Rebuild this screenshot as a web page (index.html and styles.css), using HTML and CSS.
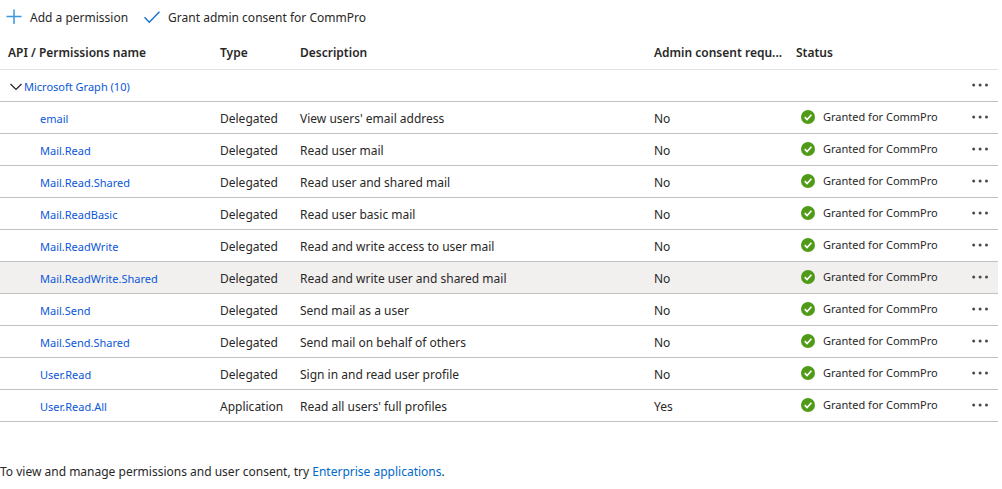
FILE: index.html
```
<!DOCTYPE html>
<html lang="en">
<head>
    <meta charset="UTF-8">
    <meta name="viewport" content="width=device-width, initial-scale=1.0">
    <title>API permissions</title>
    <link rel="stylesheet" href="styles.css">
</head>
<body>
    <!-- Shared icons -->
    <svg class="icon-defs" aria-hidden="true">
        <symbol id="granted" viewBox="0 0 14 14">
            <circle cx="7" cy="7" r="7" fill="#4f9a17"/>
            <path d="M3.7 7.2 L6.1 9.6 L10.4 4.7" fill="none" stroke="#fff" stroke-width="1.7"/>
        </symbol>
        <symbol id="more" viewBox="0 0 16 4">
            <circle cx="1.7" cy="2" r="1.5"/>
            <circle cx="8.1" cy="2" r="1.5"/>
            <circle cx="14.5" cy="2" r="1.5"/>
        </symbol>
    </svg>

    <div class="toolbar">
        <button class="command">
            <svg class="command-icon" viewBox="0 0 16 16"><path d="M8 0.5 V15 M0.5 7.5 H15.5" stroke="#3a96dd" stroke-width="1.5"/></svg>
            Add a permission
        </button>
        <button class="command">
            <svg class="command-icon" viewBox="0 0 16 16"><path d="M0.5 8.3 L5.3 13.2 L15.5 2.8" fill="none" stroke="#1a73d0" stroke-width="1.5"/></svg>
            Grant admin consent for CommPro
        </button>
    </div>

    <table class="permissions">
        <colgroup>
            <col class="col-name">
            <col class="col-type">
            <col class="col-description">
            <col class="col-consent">
            <col class="col-status">
            <col class="col-more">
        </colgroup>
        <thead>
            <tr>
                <th>API / Permissions name</th>
                <th>Type</th>
                <th>Description</th>
                <th>Admin consent requ...</th>
                <th>Status</th>
                <th></th>
            </tr>
        </thead>
        <tbody>
            <tr class="group">
                <td colspan="5">
                    <div class="group-name">
                        <button class="toggle" aria-label="Collapse Microsoft Graph"><svg viewBox="0 0 12 8"><path d="M0.5 1 L6 6.5 L11.5 1" fill="none" stroke="#222" stroke-width="1.2"/></svg></button>
                        <a href="#">Microsoft Graph (10)</a>
                    </div>
                </td>
                <td><button class="more" aria-label="More"><svg><use href="#more"/></svg></button></td>
            </tr>
            <tr>
                <td><a href="#">email</a></td>
                <td>Delegated</td>
                <td>View users' email address</td>
                <td>No</td>
                <td><div class="status"><svg><use href="#granted"/></svg>Granted for CommPro</div></td>
                <td><button class="more" aria-label="More"><svg><use href="#more"/></svg></button></td>
            </tr>
            <tr>
                <td><a href="#">Mail.Read</a></td>
                <td>Delegated</td>
                <td>Read user mail</td>
                <td>No</td>
                <td><div class="status"><svg><use href="#granted"/></svg>Granted for CommPro</div></td>
                <td><button class="more" aria-label="More"><svg><use href="#more"/></svg></button></td>
            </tr>
            <tr>
                <td><a href="#">Mail.Read.Shared</a></td>
                <td>Delegated</td>
                <td>Read user and shared mail</td>
                <td>No</td>
                <td><div class="status"><svg><use href="#granted"/></svg>Granted for CommPro</div></td>
                <td><button class="more" aria-label="More"><svg><use href="#more"/></svg></button></td>
            </tr>
            <tr>
                <td><a href="#">Mail.ReadBasic</a></td>
                <td>Delegated</td>
                <td>Read user basic mail</td>
                <td>No</td>
                <td><div class="status"><svg><use href="#granted"/></svg>Granted for CommPro</div></td>
                <td><button class="more" aria-label="More"><svg><use href="#more"/></svg></button></td>
            </tr>
            <tr>
                <td><a href="#">Mail.ReadWrite</a></td>
                <td>Delegated</td>
                <td>Read and write access to user mail</td>
                <td>No</td>
                <td><div class="status"><svg><use href="#granted"/></svg>Granted for CommPro</div></td>
                <td><button class="more" aria-label="More"><svg><use href="#more"/></svg></button></td>
            </tr>
            <tr class="selected">
                <td><a href="#">Mail.ReadWrite.Shared</a></td>
                <td>Delegated</td>
                <td>Read and write user and shared mail</td>
                <td>No</td>
                <td><div class="status"><svg><use href="#granted"/></svg>Granted for CommPro</div></td>
                <td><button class="more" aria-label="More"><svg><use href="#more"/></svg></button></td>
            </tr>
            <tr>
                <td><a href="#">Mail.Send</a></td>
                <td>Delegated</td>
                <td>Send mail as a user</td>
                <td>No</td>
                <td><div class="status"><svg><use href="#granted"/></svg>Granted for CommPro</div></td>
                <td><button class="more" aria-label="More"><svg><use href="#more"/></svg></button></td>
            </tr>
            <tr>
                <td><a href="#">Mail.Send.Shared</a></td>
                <td>Delegated</td>
                <td>Send mail on behalf of others</td>
                <td>No</td>
                <td><div class="status"><svg><use href="#granted"/></svg>Granted for CommPro</div></td>
                <td><button class="more" aria-label="More"><svg><use href="#more"/></svg></button></td>
            </tr>
            <tr>
                <td><a href="#">User.Read</a></td>
                <td>Delegated</td>
                <td>Sign in and read user profile</td>
                <td>No</td>
                <td><div class="status"><svg><use href="#granted"/></svg>Granted for CommPro</div></td>
                <td><button class="more" aria-label="More"><svg><use href="#more"/></svg></button></td>
            </tr>
            <tr>
                <td><a href="#">User.Read.All</a></td>
                <td>Application</td>
                <td>Read all users' full profiles</td>
                <td>Yes</td>
                <td><div class="status"><svg><use href="#granted"/></svg>Granted for CommPro</div></td>
                <td><button class="more" aria-label="More"><svg><use href="#more"/></svg></button></td>
            </tr>
        </tbody>
    </table>

    <p class="footnote">To view and manage permissions and user consent, try <a href="#">Enterprise applications</a>.</p>
</body>
</html>
```
FILE: styles.css
```
* {
    margin: 0;
    padding: 0;
    box-sizing: border-box;
}

body {
    font-family: 'Segoe UI', 'Noto Sans', sans-serif;
    font-size: 12px;
    line-height: 16px;
    color: #292827;
    background-color: #ffffff;
    padding-right: 4px;
}

button {
    font: inherit;
    color: inherit;
    background: none;
    border: none;
    cursor: pointer;
}

a {
    color: #0b57d8;
    text-decoration: none;
}

a:hover {
    text-decoration: underline;
}

.icon-defs {
    display: none;
}

/* Toolbar */
.toolbar {
    display: flex;
    gap: 16px;
    height: 36px;
    padding-left: 6px;
}

.command {
    display: flex;
    align-items: center;
    gap: 8px;
}

.command-icon {
    width: 16px;
    height: 16px;
    margin-bottom: 2px;
}

/* Permissions table */
.permissions {
    width: 100%;
    table-layout: fixed;
    border-collapse: separate;
    border-spacing: 0;
}

.col-name {
    width: 212px;
}

.col-type {
    width: 80px;
}

.col-consent {
    width: 142px;
}

.col-status {
    width: 176px;
}

.col-more {
    width: 34px;
}

.permissions th {
    height: 34px;
    padding: 0 4px 0 8px;
    text-align: left;
    font-weight: 600;
    white-space: nowrap;
    border-bottom: 1px solid #e3e3e3;
}

.permissions td {
    height: 32px;
    padding: 2px 0 0 8px;
    white-space: nowrap;
    border-bottom: 1px solid #c2c2c2;
}

.permissions td:first-child {
    padding-left: 40px;
    font-size: 11px;
}

.permissions .group td:first-child {
    padding-left: 10px;
}

.permissions td:last-child {
    padding: 0 10px 0 0;
}

.selected {
    background-color: #f1f0ef;
}

.group-name {
    display: flex;
    align-items: center;
    gap: 2px;
}

.toggle svg {
    display: block;
    width: 12px;
    height: 8px;
}

.status {
    display: flex;
    align-items: center;
    gap: 8px;
    padding: 0 0 3px 5px;
    font-size: 11px;
}

.status svg {
    width: 14px;
    height: 14px;
}

.more {
    display: block;
    margin-left: auto;
    padding-bottom: 2px;
}

.more svg {
    display: block;
    width: 16px;
    height: 4px;
    fill: #4a4a4a;
}

.footnote {
    margin-top: 42px;
}

.footnote a {
    color: #0069c9;
}
```
